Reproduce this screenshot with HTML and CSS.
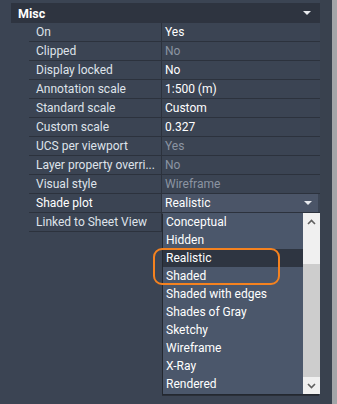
FILE: index.html
```html
<!DOCTYPE html>
<html lang="en">
  <head>
    <meta charset="UTF-8" />
    <meta name="viewport" content="width=device-width, initial-scale=1.0" />
    <title>Properties - Misc</title>
    <link rel="stylesheet" href="styles.css">
  </head>
  <body>
    <div class="palette">
      <div class="panel">
        <div class="section-head">
          <span>Misc</span>
          <span class="caret"></span>
        </div>
        <div class="props">
          <div class="row"><div class="name">On</div><div class="val">Yes</div></div>
          <div class="row"><div class="name">Clipped</div><div class="val off">No</div></div>
          <div class="row"><div class="name">Display locked</div><div class="val">No</div></div>
          <div class="row"><div class="name">Annotation scale</div><div class="val">1:500 (m)</div></div>
          <div class="row"><div class="name">Standard scale</div><div class="val">Custom</div></div>
          <div class="row"><div class="name">Custom scale</div><div class="val">0.327</div></div>
          <div class="row"><div class="name">UCS per viewport</div><div class="val off">Yes</div></div>
          <div class="row"><div class="name">Layer property overri...</div><div class="val off">No</div></div>
          <div class="row"><div class="name">Visual style</div><div class="val off">Wireframe</div></div>
          <div class="row active">
            <div class="name">Shade plot</div>
            <div class="val">
              <div class="combo">
                <span>Realistic</span>
                <span class="caret"></span>
              </div>
            </div>
          </div>
          <div class="row"><div class="name">Linked to Sheet View</div><div class="val"></div></div>
        </div>

        <div class="droplist">
          <ul class="options">
            <li>Conceptual</li>
            <li>Hidden</li>
            <li class="hot">Realistic</li>
            <li>Shaded</li>
            <li>Shaded with edges</li>
            <li>Shades of Gray</li>
            <li>Sketchy</li>
            <li>Wireframe</li>
            <li>X-Ray</li>
            <li>Rendered</li>
          </ul>
          <div class="scroll">
            <div class="arrow">
              <svg width="9" height="6" viewBox="0 0 9 6"><path d="M1 5 L4.5 1.5 L8 5" fill="none" stroke="#606060" stroke-width="1.6"/></svg>
            </div>
            <div class="track"><div class="thumb"></div></div>
            <div class="arrow">
              <svg width="9" height="6" viewBox="0 0 9 6"><path d="M1 1 L4.5 4.5 L8 1" fill="none" stroke="#606060" stroke-width="1.6"/></svg>
            </div>
          </div>
        </div>
        <div class="ring"></div>
      </div>
      <div class="gutter"></div>
      <div class="edge"></div>
    </div>
  </body>
</html>
```

FILE: styles.css
```css
body {
  margin: 0;
  background: #3b4453;
  font-family: Roboto, "Noto Sans", sans-serif;
  font-size: 12px;
  color: #dfe3ea;
}
.palette {
  display: flex;
  height: 404px;
}
.panel {
  position: relative;
  width: 320px;
}
.gutter {
  width: 12px;
  background: #39414e;
}
.edge {
  width: 5px;
  background: #a3a5a8;
}
.section-head {
  display: flex;
  align-items: center;
  justify-content: space-between;
  height: 20px;
  margin: 3px 0 0 11px;
  padding: 0 9px 0 7px;
  background: #2e3440;
  color: #ffffff;
  font-weight: bold;
  font-size: 12.5px;
}
.caret {
  width: 0;
  height: 0;
  border-left: 4px solid transparent;
  border-right: 4px solid transparent;
  border-top: 4px solid #e8eaee;
}
.props {
  margin-left: 29px;
}
.row {
  display: grid;
  grid-template-columns: 133px 1fr;
  height: 18px;
  border-bottom: 1px solid #2c323d;
  line-height: 19px;
}
.name {
  padding-left: 7px;
  border-right: 1px solid #2c323d;
  white-space: nowrap;
  overflow: hidden;
}
.val {
  padding-left: 3px;
  color: #ffffff;
  white-space: nowrap;
}
.val.off {
  color: #8b94a2;
}
.row.active .name {
  color: #ffffff;
}
.row.active .val {
  padding: 0 2px 0 0;
}
.combo {
  display: flex;
  align-items: center;
  justify-content: space-between;
  height: 18px;
  padding: 0 6px 0 3px;
  background: #4b5568;
  color: #ffffff;
}
.droplist {
  position: absolute;
  left: 163px;
  top: 213px;
  width: 157px;
  height: 181px;
  display: flex;
  background: #4b576b;
  box-shadow: -1px 1px 0 #232830, -1px 2px 0 #2a2f38;
}
.options {
  flex: 1;
  margin: 0;
  padding: 0;
  list-style: none;
}
.options li {
  height: 18px;
  line-height: 19px;
  padding-left: 3px;
  color: #ffffff;
}
.options li.hot {
  background: #2e3541;
}
.scroll {
  display: flex;
  flex-direction: column;
  width: 17px;
  background: #f0f0f0;
}
.arrow {
  display: flex;
  align-items: center;
  justify-content: center;
  height: 17px;
}
.track {
  flex: 1;
  padding-top: 34px;
}
.thumb {
  height: 113px;
  background: #cdcdcd;
}
.ring {
  position: absolute;
  left: 153px;
  top: 248px;
  width: 123px;
  height: 33px;
  border: 2.5px solid #f5821f;
  border-radius: 9px;
}
```
